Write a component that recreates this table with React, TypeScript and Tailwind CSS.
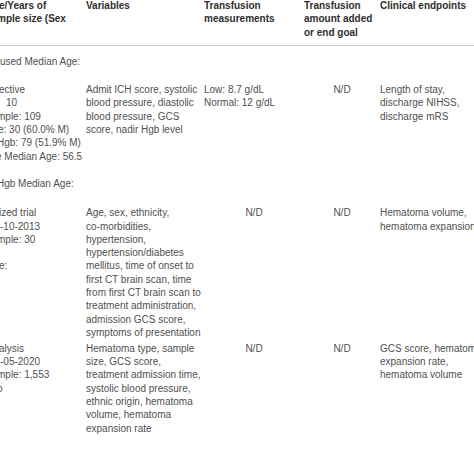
const cell = 'whitespace-nowrap'

function Lines({ lines, className = '' }: { lines: string[]; className?: string }) {
  return (
    <div className={className}>
      {lines.map((l, i) => (
        <div key={i} className={cell}>
          {l || '\u00a0'}
        </div>
      ))}
    </div>
  )
}

// first column is cut by the left edge of the crop
function CutLines({ lines }: { lines: [string, number][] }) {
  return (
    <div className="overflow-hidden">
      {lines.map(([t, shift], i) => (
        <div key={i} className={cell} style={{ marginLeft: shift }}>
          {t || '\u00a0'}
        </div>
      ))}
    </div>
  )
}

const grid = 'grid grid-cols-[86px_118px_100px_76px_160px]'

export default function App() {
  return (
    <div
      className="w-[474px] h-[474px] overflow-hidden bg-white text-[10px] leading-[13.3px] text-[#505050]"
      style={{ fontFamily: '"Liberation Sans", Arial, sans-serif' }}
    >
      <div className="w-[560px] -mt-[1px]">
        <div className={`${grid} pb-[6px] border-b border-[#c9c9c9] font-bold text-[#2e2e2e]`}>
          <CutLines lines={[['e/Years of', -1], ['mple size (Sex', -3], ['', 0]]} />
          <Lines lines={['Variables']} />
          <Lines lines={['Transfusion', 'measurements']} />
          <Lines lines={['Transfusion', 'amount added', 'or end goal']} />
          <Lines lines={['Clinical endpoints']} />
        </div>

        <div className="pt-[9px] pb-[15px] overflow-hidden">
          <div className={cell}>used Median Age:</div>
        </div>

        <div className={grid}>
          <CutLines
            lines={[
              ['ective', -1],
              ['10', 6],
              ['mple: 109', -3],
              ['e: 30 (60.0% M)', -2],
              ['Hgb: 79 (51.9% M)', -3],
              ['e Median Age: 56.5', -4],
            ]}
          />
          <Lines lines={['Admit ICH score, systolic', 'blood pressure, diastolic', 'blood pressure, GCS', 'score, nadir Hgb level']} />
          <Lines lines={['Low: 8.7 g/dL', 'Normal: 12 g/dL']} />
          <div className="text-center">N/D</div>
          <Lines lines={['Length of stay,', 'discharge NIHSS,', 'discharge mRS']} />
        </div>

        <div className="pt-[14px] pb-[16px] overflow-hidden">
          <div className={cell} style={{ marginLeft: -3 }}>
            Hgb Median Age:
          </div>
        </div>

        <div className={grid}>
          <CutLines lines={[['ized trial', -1], ['-10-2013', 0], ['mple: 30', -3], ['', 0], ['e:', -1]]} />
          <Lines
            lines={[
              'Age, sex, ethnicity,',
              'co-morbidities,',
              'hypertension,',
              'hypertension/diabetes',
              'mellitus, time of onset to',
              'first CT brain scan, time',
              'from first CT brain scan to',
              'treatment administration,',
              'admission GCS score,',
              'symptoms of presentation',
            ]}
          />
          <div className="text-center">N/D</div>
          <div className="text-center">N/D</div>
          <Lines lines={['Hematoma volume,', 'hematoma expansion rate']} />
        </div>

        <div className={`${grid} pt-[2.5px]`}>
          <CutLines lines={[['alysis', -1], ['-05-2020', 0], ['mple: 1,553', -3], ['o', -3]]} />
          <Lines
            lines={[
              'Hematoma type, sample',
              'size, GCS score,',
              'treatment admission time,',
              'systolic blood pressure,',
              'ethnic origin, hematoma',
              'volume, hematoma',
              'expansion rate',
            ]}
          />
          <div className="text-center">N/D</div>
          <div className="text-center">N/D</div>
          <Lines lines={['GCS score, hematoma', 'expansion rate,', 'hematoma volume']} />
        </div>
      </div>
    </div>
  )
}
